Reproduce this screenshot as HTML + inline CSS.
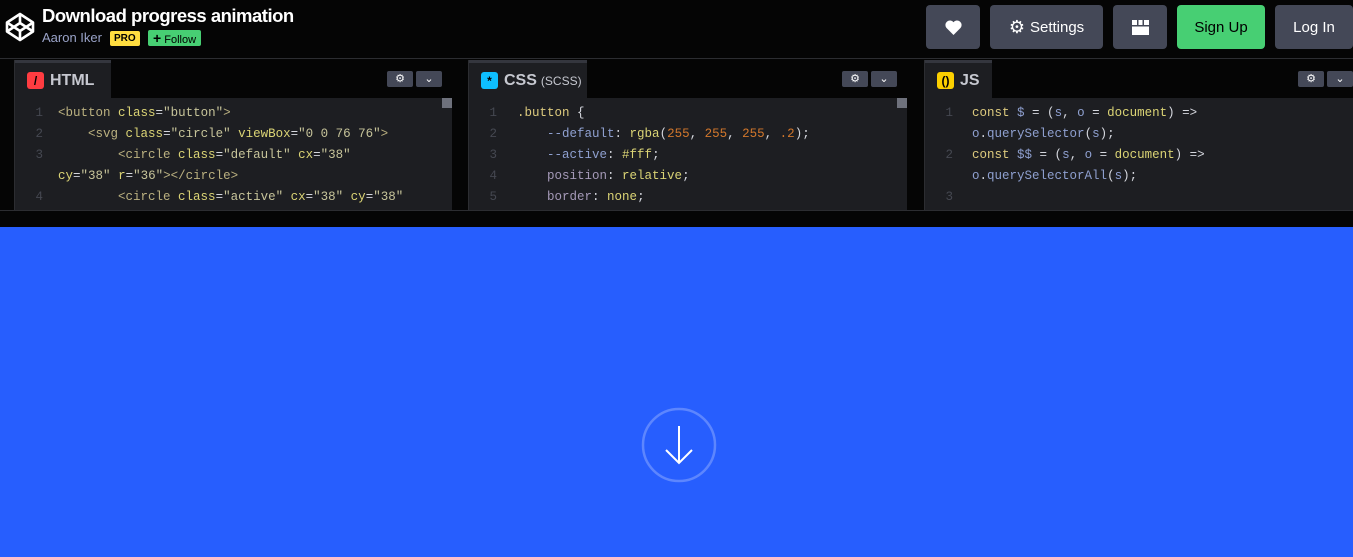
<!DOCTYPE html>
<html><head><meta charset="utf-8"><style>
*{box-sizing:border-box;margin:0;padding:0}
body{width:1353px;height:557px;overflow:hidden;background:#050505;font-family:"Liberation Sans",sans-serif;position:relative}
.hdr{position:absolute;left:0;top:0;width:1353px;height:59px;background:#050505;border-bottom:1px solid #2c2d31}
.title{position:absolute;left:42px;top:5px;color:#fff;font-weight:bold;font-size:18.5px;letter-spacing:-0.5px}
.author{position:absolute;left:42px;top:30px;color:#9aa3c8;font-size:13px}
.pro{position:absolute;left:110px;top:31px;background:#ffdd40;color:#000;font-size:10px;font-weight:bold;padding:2px 4px;border-radius:2px}
.fol{position:absolute;left:148px;top:30px;background:#47cf73;color:#000;font-size:11px;padding:2px 5px;border-radius:2px;height:16px;line-height:12px}
.btn{position:absolute;top:5px;height:44px;background:#444857;border-radius:4px;color:#fff;font-size:15px;display:flex;align-items:center;justify-content:center}
.panel{position:absolute;top:60px;height:150px;background:#1d1e22;border-left:1px solid #2c2d31}
.tabbar{position:absolute;left:0;top:0;right:0;height:38px;background:#050505}
.tab{position:absolute;left:0;top:0;height:38px;background:#1d1e22;border-top:3px solid #34363e;color:#c6c8d0;font-weight:bold;font-size:16px;display:flex;align-items:center;padding-left:12px}
.ic{width:17px;height:17px;border-radius:3px;margin-right:6px;display:inline-flex;align-items:center;justify-content:center;font-size:12px;color:#000}
.sb{position:absolute;top:11px;width:26px;height:16px;background:#444857;border-radius:2px;color:#fff;font-size:11px;text-align:center;line-height:16px}
.code{position:absolute;top:43px;left:0;right:0;font-family:"Liberation Mono","DejaVu Sans Mono",monospace;font-size:12.5px;line-height:21px;color:#d5d7de;white-space:pre}
.ln{position:absolute;left:0;width:28px;text-align:right;color:#454851}
.tx{position:absolute}
.t{color:#bbb180}.a{color:#dbd475}.s{color:#c7c49a}.p{color:#d5d7de}.v{color:#8fa0d0}.n{color:#d2772c}.k{color:#ddca7e}.pr{color:#a59ab8}
.scr{position:absolute;right:0;top:38px;width:10px;height:10px;background:#6e717c}
.blue{position:absolute;left:0;top:227px;width:1353px;height:330px;background:#275efe}
</style></head><body>
<div class="hdr">
<svg style="position:absolute;left:4px;top:11px" width="32" height="32" viewBox="0 0 32 32" fill="none" stroke="#fff" stroke-width="2.6" stroke-linejoin="round"><path d="M16 3L29 11.5V20.5L16 29L3 20.5V11.5Z"/><path d="M3 11.5L16 20L29 11.5M16 3V11.5M3 20.5L16 12L29 20.5M16 29V20"/></svg>
<div class="title">Download progress animation</div>
<div class="author">Aaron Iker</div>
<div class="pro">PRO</div>
<div class="fol"><b style="font-size:14px">+</b> Follow</div>
<div class="btn" style="left:926px;width:54px"><svg width="17" height="15" viewBox="0 0 24 21"><path fill="#fff" d="M12 21L2 11A6 6 0 0 1 12 3A6 6 0 0 1 22 11Z"/></svg></div>
<div class="btn" style="left:990px;width:113px"><span style="font-size:18px;margin-right:5px">⚙</span>Settings</div>
<div class="btn" style="left:1113px;width:54px"><svg width="17" height="15"><rect x="0" y="0" width="17" height="15" fill="#fff"/><rect x="5" y="0" width="1.5" height="5" fill="#444857"/><rect x="10.5" y="0" width="1.5" height="5" fill="#444857"/><rect x="0" y="5" width="17" height="1.5" fill="#444857"/></svg></div>
<div class="btn" style="left:1177px;width:88px;background:#47cf73;color:#000">Sign Up</div>
<div class="btn" style="left:1275px;width:78px">Log In</div>
</div>

<div class="panel" style="left:14px;width:438px">
<div class="tabbar"></div>
<div class="tab" style="width:96px"><span class="ic" style="background:#ff3c41">/</span>HTML</div>
<div class="sb" style="left:372px">⚙</div><div class="sb" style="left:401px">⌄</div>
<div class="scr"></div>
<div class="code">
<span class="ln" style="top:0">1</span><span class="tx" style="left:43px;top:0"><span class="t">&lt;button</span> <span class="a">class</span>=<span class="s">"button"</span><span class="t">&gt;</span></span>
<span class="ln" style="top:21px">2</span><span class="tx" style="left:43px;top:21px">    <span class="t">&lt;svg</span> <span class="a">class</span>=<span class="s">"circle"</span> <span class="a">viewBox</span>=<span class="s">"0 0 76 76"</span><span class="t">&gt;</span></span>
<span class="ln" style="top:42px">3</span><span class="tx" style="left:43px;top:42px">        <span class="t">&lt;circle</span> <span class="a">class</span>=<span class="s">"default"</span> <span class="a">cx</span>=<span class="s">"38"</span></span>
<span class="tx" style="left:43px;top:63px"><span class="a">cy</span>=<span class="s">"38"</span> <span class="a">r</span>=<span class="s">"36"</span><span class="t">&gt;&lt;/circle&gt;</span></span>
<span class="ln" style="top:84px">4</span><span class="tx" style="left:43px;top:84px">        <span class="t">&lt;circle</span> <span class="a">class</span>=<span class="s">"active"</span> <span class="a">cx</span>=<span class="s">"38"</span> <span class="a">cy</span>=<span class="s">"38"</span></span>
</div></div>

<div class="panel" style="left:468px;width:439px">
<div class="tabbar"></div>
<div class="tab" style="width:118px"><span class="ic" style="background:#0ebeff">*</span>CSS<span style="font-weight:normal;font-size:12px;margin-left:4px">(SCSS)</span></div>
<div class="sb" style="left:373px">⚙</div><div class="sb" style="left:402px">⌄</div>
<div class="scr"></div>
<div class="code">
<span class="ln" style="top:0">1</span><span class="tx" style="left:48px;top:0"><span class="k">.button</span> {</span>
<span class="ln" style="top:21px">2</span><span class="tx" style="left:48px;top:21px">    <span class="v">--default</span>: <span class="a">rgba</span>(<span class="n">255</span>, <span class="n">255</span>, <span class="n">255</span>, <span class="n">.2</span>);</span>
<span class="ln" style="top:42px">3</span><span class="tx" style="left:48px;top:42px">    <span class="v">--active</span>: <span class="a">#fff</span>;</span>
<span class="ln" style="top:63px">4</span><span class="tx" style="left:48px;top:63px">    <span class="pr">position</span>: <span class="a">relative</span>;</span>
<span class="ln" style="top:84px">5</span><span class="tx" style="left:48px;top:84px">    <span class="pr">border</span>: <span class="a">none</span>;</span>
</div></div>

<div class="panel" style="left:924px;width:429px">
<div class="tabbar"></div>
<div class="tab" style="width:67px"><span class="ic" style="background:#fcd000">()</span>JS</div>
<div class="sb" style="left:373px">⚙</div><div class="sb" style="left:402px">⌄</div>
<div class="code">
<span class="ln" style="top:0">1</span><span class="tx" style="left:47px;top:0"><span class="k">const</span> <span class="v">$</span> = (<span class="v">s</span>, <span class="v">o</span> = <span class="a">document</span>) =&gt;</span>
<span class="tx" style="left:47px;top:21px"><span class="v">o</span>.<span class="v">querySelector</span>(<span class="v">s</span>);</span>
<span class="ln" style="top:42px">2</span><span class="tx" style="left:47px;top:42px"><span class="k">const</span> <span class="v">$$</span> = (<span class="v">s</span>, <span class="v">o</span> = <span class="a">document</span>) =&gt;</span>
<span class="tx" style="left:47px;top:63px"><span class="v">o</span>.<span class="v">querySelectorAll</span>(<span class="v">s</span>);</span>
<span class="ln" style="top:84px">3</span>
</div></div>

<div style="position:absolute;left:0;top:210px;width:1353px;height:1px;background:#2c2d31"></div>
<div class="blue">
<svg style="position:absolute;left:639px;top:178px" width="80" height="80" viewBox="0 0 80 80" fill="none"><circle cx="40" cy="40" r="36" stroke="rgba(255,255,255,.25)" stroke-width="2.5"/><path d="M40 21V58M27 45L40 58L53 45" stroke="#fff" stroke-width="2"/></svg>
</div>
</body></html>
